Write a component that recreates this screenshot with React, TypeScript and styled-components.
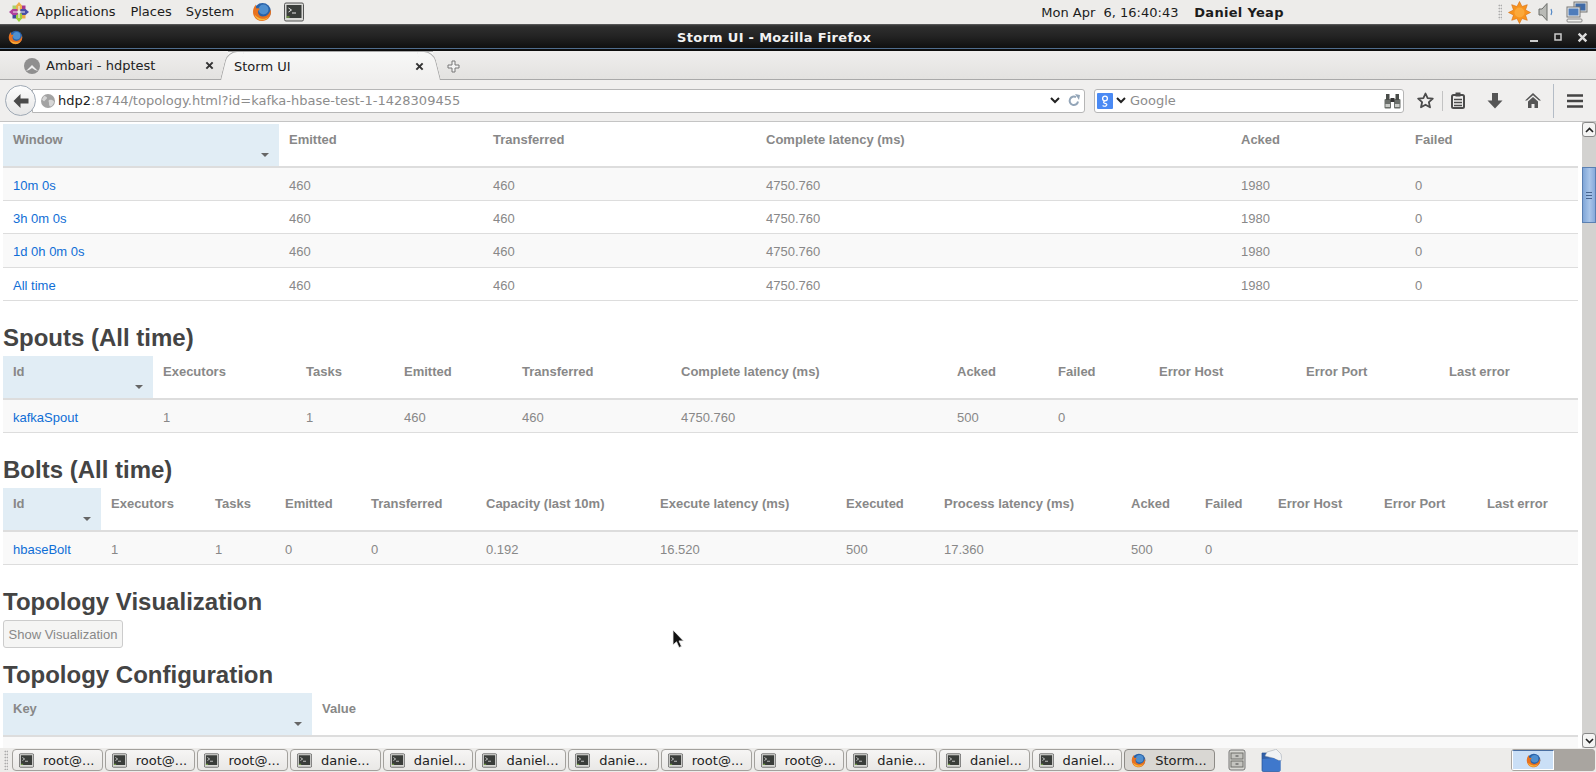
import React from "react";
import styled, { createGlobalStyle } from "styled-components";

const GlobalStyle = createGlobalStyle`
  html, body {
    margin: 0;
    padding: 0;
    overflow: hidden;
    background: #fff;
  }
  * { box-sizing: border-box; }
`;

const Screen = styled.div`
  width: 1596px;
  height: 772px;
  display: flex;
  flex-direction: column;
  overflow: hidden;
  font-family: "DejaVu Sans", sans-serif;
  font-size: 13px;
  color: #1c1c1c;
`;

/* ---------- gnome panel ---------- */
const TopPanel = styled.div`
  height: 24px;
  flex: none;
  display: flex;
  align-items: center;
  padding-left: 8px;
  background: #edecea;
`;
const PanelMenu = styled.span<{ $gap: number }>`
  margin-left: ${(p) => p.$gap}px;
  line-height: 22px;
  white-space: nowrap;
`;
const PanelLauncher = styled.span<{ $gap: number }>`
  margin-left: ${(p) => p.$gap}px;
  display: flex;
`;
const Clock = styled.span`
  margin-left: 737px;
  width: 153px;
  white-space: pre;
`;
const UserName = styled.span`
  font-weight: 700;
  width: 89px;
  letter-spacing: 0.3px;
  white-space: nowrap;
`;
const Handle = styled.span`
  width: 4px;
  height: 16px;
  margin-left: 215px;
  background-image: radial-gradient(#9c9c9c 0.7px, transparent 0.9px);
  background-size: 2.5px 3px;
`;
const Tray = styled.span<{ $gap: number }>`
  margin-left: ${(p) => p.$gap}px;
  display: flex;
`;

/* ---------- window chrome ---------- */
const TitleBar = styled.div`
  height: 27px;
  flex: none;
  display: grid;
  grid-template-columns: 677px 195px 1fr;
  align-items: center;
  padding-left: 8px;
  padding-right: 8px;
  color: #f2f2f2;
  font-weight: 700;
  background: linear-gradient(#3c3c3c 0, #2e2e2e 8%, #222 50%, #111 90%);
  border-top: 1px solid #555;
  border-bottom: 2px solid #0c0c0c;
  box-shadow: inset 0 -1px 0 #4f6c8c;
`;
const WindowTitle = styled.span`
  letter-spacing: 0.3px;
  margin-left: -8px;
  white-space: nowrap;
`;
const WindowControls = styled.div`
  justify-self: end;
  display: flex;
  align-items: center;
  gap: 14px;
`;

const TabStrip = styled.div`
  height: 29px;
  flex: none;
  display: flex;
  align-items: flex-end;
  padding-left: 24px;
  background: linear-gradient(#efeeed, #e3e2e0);
  border-bottom: 1px solid #a9a9a9;
`;
const InactiveTab = styled.div`
  width: 198px;
  height: 28px;
  padding: 1px 8px 0 0;
  display: flex;
  align-items: center;
  gap: 6px;
  color: #222;
`;
const TabTitle = styled.span`
  flex: 1;
`;
const ActiveTab = styled.div`
  position: relative;
  isolation: isolate;
  width: 205px;
  height: 29px;
  margin: 0 6px -1px 6px;
  padding: 1px 9px 0 6px;
  display: flex;
  align-items: center;
  background: linear-gradient(#f8f8f7, #f0efee);
  border-top: 1px solid #a9a9a9;
  &::before,
  &::after {
    content: "";
    position: absolute;
    z-index: -1;
    top: -1px;
    bottom: 0;
    width: 16px;
    background: linear-gradient(#f8f8f7, #f0efee);
    border-top: 1px solid #a9a9a9;
  }
  &::before {
    left: -8px;
    border-left: 1px solid #a9a9a9;
    border-radius: 10px 0 0 0;
    transform-origin: bottom left;
    transform: skewX(-14deg);
  }
  &::after {
    right: -8px;
    border-right: 1px solid #a9a9a9;
    border-radius: 0 10px 0 0;
    transform-origin: bottom right;
    transform: skewX(14deg);
  }
`;
const TabClose = styled.span`
  display: flex;
`;
const NewTab = styled.span`
  margin: 0 0 6px 8px;
  display: flex;
`;

const NavBar = styled.div`
  height: 42px;
  flex: none;
  display: flex;
  align-items: center;
  padding-left: 5px;
  background: #f0efee;
  border-bottom: 1px solid #c4c4c4;
`;
const BackButton = styled.div`
  width: 31px;
  height: 31px;
  flex: none;
  z-index: 1;
  display: flex;
  align-items: center;
  justify-content: center;
  border: 1px solid #9fa9b5;
  border-radius: 50%;
  background: linear-gradient(#fdfdfd, #e6e6e6);
`;
const UrlBox = styled.div`
  width: 1053px;
  height: 24px;
  flex: none;
  margin-left: -4px;
  padding: 0 4px 0 8px;
  display: flex;
  align-items: center;
  background: #fff;
  border: 1px solid #b6b6b6;
  border-radius: 0 3px 3px 0;
`;
const UrlText = styled.span`
  margin-left: 3px;
  flex: 1;
  color: #8c8c8c;
  white-space: nowrap;
  b {
    font-weight: 400;
    color: #222;
  }
`;
const UrlEnd = styled.span`
  display: flex;
  align-items: center;
  gap: 8px;
`;
const SearchBox = styled.div`
  width: 310px;
  height: 24px;
  flex: none;
  margin-left: 9px;
  padding: 0 2px;
  display: flex;
  align-items: center;
  background: #fff;
  border: 1px solid #b6b6b6;
  border-radius: 3px;
`;
const SearchPlaceholder = styled.span`
  flex: 1;
  margin-left: 1px;
  color: #8c8c8c;
`;
const ToolButton = styled.span<{ $w: number }>`
  width: ${(p) => p.$w}px;
  flex: none;
  display: flex;
  justify-content: center;
`;
const ToolSep = styled.span`
  width: 1px;
  height: 20px;
  flex: none;
  background: #c3c3c3;
`;
const ToolSepTall = styled(ToolSep)`
  height: 34px;
  background: #b4bcc6;
`;

/* ---------- page ---------- */
const Viewport = styled.div`
  flex: 1;
  min-height: 0;
  display: flex;
  background: #fff;
`;
const Page = styled.div`
  width: 1582px;
  flex: none;
  overflow: hidden;
  padding: 2px 4px 0 3px;
  font-family: "Liberation Sans", Arial, sans-serif;
  font-size: 13px;
  color: #888;
`;
const Heading = styled.h2<{ $top?: number }>`
  margin: ${(p) => p.$top ?? 24}px 0 5px;
  font-size: 24px;
  line-height: 26px;
  font-weight: 700;
  color: #444;
`;
const Table = styled.table`
  width: 1575px;
  table-layout: fixed;
  border-collapse: separate;
  border-spacing: 0;
  tbody tr:nth-child(3) td {
    height: 34px;
  }
`;
const HeadCell = styled.th<{ $sorted?: boolean }>`
  position: relative;
  height: 44px;
  padding: 7px 10px 0;
  line-height: 18px;
  text-align: left;
  vertical-align: top;
  font-weight: 700;
  color: #888;
  border-bottom: 2px solid #ddd;
  background: ${(p) => (p.$sorted ? "#e1edf5" : "#fff")};
  ${(p) =>
    p.$sorted &&
    `&::after {
      content: "";
      position: absolute;
      right: 10px;
      bottom: 9px;
      border-style: solid;
      border-width: 4px 4px 0;
      border-color: #666 transparent transparent;
    }`}
`;
const Row = styled.tr<{ $odd: boolean }>`
  background: ${(p) => (p.$odd ? "#f9f9f9" : "#fff")};
`;
const Cell = styled.td`
  height: 33px;
  padding: 3px 10px 0;
  line-height: 18px;
  white-space: nowrap;
  color: #888;
  border-bottom: 1px solid #ddd;
`;
const RowLink = styled.a`
  color: #0f6ed6;
  text-decoration: none;
`;
const ShowButton = styled.button`
  display: block;
  width: 120px;
  height: 28px;
  padding: 0;
  font: inherit;
  color: #888;
  text-align: center;
  background: #f5f5f4;
  border: 1px solid #ccc;
  border-radius: 3px;
`;

const ScrollBar = styled.div`
  width: 14px;
  flex: none;
  display: flex;
  flex-direction: column;
  background: #d3d2d0;
`;
const ScrollArrow = styled.div`
  height: 15px;
  flex: none;
  display: flex;
  align-items: center;
  justify-content: center;
  background: #f4f4f3;
  border: 1px solid #888;
  border-radius: 3px;
`;
const ScrollThumb = styled.div`
  height: 56px;
  margin-top: 30px;
  display: flex;
  flex-direction: column;
  align-items: center;
  justify-content: center;
  gap: 2px;
  background: linear-gradient(90deg, #80a6d8, #a9c5e9 55%, #86aadb);
  border: 1px solid #5b80b2;
  i {
    width: 6px;
    height: 1px;
    background: #46648f;
  }
`;
const ScrollSpacer = styled.div`
  flex: 1;
`;

const CursorMark = styled.svg`
  position: absolute;
  left: 672px;
  top: 629px;
`;

/* ---------- bottom panel ---------- */
const BottomPanel = styled.div`
  height: 24px;
  flex: none;
  display: flex;
  align-items: center;
  padding-left: 4px;
  background: #edecea;
`;
const BottomHandle = styled(Handle)`
  margin: 0 4px 0 0;
  height: 20px;
`;
const TaskList = styled.div`
  width: 1203px;
  display: flex;
  gap: 2px;
`;
const Task = styled.div<{ $active?: boolean }>`
  flex: 1;
  min-width: 0;
  height: 22px;
  padding-left: 6px;
  display: flex;
  align-items: center;
  gap: 9px;
  white-space: nowrap;
  overflow: hidden;
  color: #222;
  border: 1px solid ${(p) => (p.$active ? "#8d8b87" : "#a3a19d")};
  border-radius: 4px;
  background: ${(p) =>
    p.$active ? "#d9d7d3" : "linear-gradient(#f6f5f4, #e9e8e6)"};
`;
const Launcher = styled.span<{ $gap: number }>`
  margin-left: ${(p) => p.$gap}px;
  display: flex;
`;
const Pager = styled.div`
  width: 84px;
  height: 22px;
  margin-left: 229px;
  display: flex;
  border-radius: 3px;
  overflow: hidden;
  background: #a9a5a0;
  border: 1px solid #a9a5a0;
`;
const PagerActive = styled.div`
  width: 42px;
  display: flex;
  align-items: center;
  justify-content: center;
  background: #cadff6;
  border: 1px solid #fff;
  border-top-color: #4a6ea0;
`;

/* ---------- icons ---------- */
const Firefox = ({ size }: { size: number }) => (
  <svg width={size} height={size} viewBox="0 0 20 20">
    <circle cx="10.5" cy="9.5" r="8.5" fill="#2a62a8" />
    <circle cx="11.5" cy="7.5" r="5" fill="#4f8fcf" />
    <path
      d="M4 2.500C1.800 4.800 1 7.500 1 10c0 5 4 9 9 9s9-4 9-9c0-1-.2-2-.5-2.700-.5 3.900-3.500 7.200-7.500 7.200-3 0-5-2-5-4.500 0-1.500 1-2.500 2-3-1-.9-3-1-3.500-.5-.6-1-.7-2.500-.5-3.500z"
      fill="#e8721f"
    />
    <path d="M2.500 12.500C3.500 16 6.500 18.300 10 18.300c3 0 5.500-1.500 7-3.800-2 1.800-4.500 2.500-7 2.200-3-.4-5.800-1.800-7.500-4.200z" fill="#f6b93c" />
  </svg>
);

const Terminal = ({ size }: { size: number }) => (
  <svg width={size} height={size} viewBox="0 0 20 20">
    <rect x="0.5" y="1" width="19" height="18" rx="1.5" fill="#d9d9d6" stroke="#555" />
    <rect x="2.5" y="3" width="15" height="13" fill="#3a3d3a" />
    <path d="M4.500 6l3 2-3 2M8 11h4" fill="none" stroke="#e8e8e8" strokeWidth="1" />
    <rect x="2.5" y="14.5" width="3" height="1" fill="#8fce4a" />
  </svg>
);

const DistroLogo = () => (
  <svg width="22" height="22" viewBox="0 0 22 22">
    <rect x="4.5" y="4.5" width="5.5" height="5.5" fill="#a9cf6a" />
    <rect x="12" y="4.5" width="5.5" height="5.5" fill="#a7398f" />
    <rect x="4.5" y="12" width="5.5" height="5.5" fill="#3d4a9c" />
    <rect x="12" y="12" width="5.5" height="5.5" fill="#eeaa45" />
    <path d="M11 1l3 3.500v5h-6v-5z" fill="#eeb04a" />
    <path d="M21 11l-3.500 3h-5v-6h5z" fill="#4a4fa6" />
    <path d="M11 21l-3-3.500v-5h6v5z" fill="#9ccf3f" />
    <path d="M1 11l3.500-3h5v6h-5z" fill="#b0409c" />
    <path d="M11 5v12M5 11h12" stroke="#edecea" strokeWidth="1.2" />
  </svg>
);

const Sun = () => (
  <svg width="23" height="23" viewBox="0 0 23 23">
    <polygon
      points="11.5,0.5 14,5.5 19.3,3.7 17.5,9 22.5,11.5 17.5,14 19.3,19.3 14,17.5 11.5,22.5 9,17.5 3.7,19.3 5.5,14 0.5,11.5 5.5,9 3.7,3.7 9,5.5"
      fill="#f7931e"
      stroke="#d86f10"
      strokeWidth="0.6"
    />
    <circle cx="11.5" cy="11.5" r="5" fill="#fba83a" />
  </svg>
);

const Speaker = () => (
  <svg width="16" height="20" viewBox="0 0 16 20">
    <path d="M1 7h3l5-5.500v17L4 13H1z" fill="#b9bab6" stroke="#6d6f6b" />
    <path d="M13 7c1 1.800 1 4.200 0 6" fill="none" stroke="#4f86c6" strokeWidth="1.2" />
  </svg>
);

const Network = () => (
  <svg width="22" height="22" viewBox="0 0 22 22">
    <rect x="8" y="1" width="13" height="10" fill="#dfdfdb" stroke="#777" />
    <rect x="9.5" y="2.5" width="10" height="7" fill="#3f6aa6" />
    <rect x="1" y="6" width="13" height="10" fill="#efefec" stroke="#777" />
    <rect x="2.5" y="7.5" width="10" height="7" fill="#4f7dbb" />
    <rect x="1" y="18" width="15" height="3" rx="1" fill="#f1f1ee" stroke="#888" />
  </svg>
);

const Cross = ({ size, color }: { size: number; color: string }) => (
  <svg width={size} height={size} viewBox="0 0 10 10">
    <path d="M1.500 1.500l7 7M8.500 1.500l-7 7" stroke={color} strokeWidth="2.2" />
  </svg>
);

const Minimize = () => (
  <svg width="10" height="10" viewBox="0 0 10 10">
    <rect x="1" y="8" width="8" height="2" fill="#ccc" />
  </svg>
);

const Maximize = () => (
  <svg width="10" height="10" viewBox="0 0 10 10">
    <rect x="2" y="2" width="6" height="6" fill="none" stroke="#ccc" strokeWidth="1.5" />
  </svg>
);

const AmbariLogo = () => (
  <svg width="16" height="16" viewBox="0 0 16 16">
    <circle cx="8" cy="8" r="8" fill="#8f8f8f" />
    <path d="M2 13l6-6 6 6-3-1-3-2-3 2z" fill="#eee" />
  </svg>
);

const PlusIcon = () => (
  <svg width="13" height="13" viewBox="0 0 13 13">
    <path d="M5 1h3v4h4v3H8v4H5V8H1V5h4z" fill="#f4f4f4" stroke="#777" />
  </svg>
);

const BackArrow = () => (
  <svg width="16" height="14" viewBox="0 0 16 14">
    <path d="M7.500 0L0.500 7l7 7V9.500H15.500v-5H7.500z" fill="#4a4a4a" />
  </svg>
);

const Globe = () => (
  <svg width="14" height="14" viewBox="0 0 14 14">
    <circle cx="7" cy="7" r="7" fill="#a3a3a3" />
    <path d="M3 2c2 0 3 1 3 2S4 6 3.500 7 1.500 6 1 5.500zM8 6c2-.5 4 0 5 1.500 0 2-2 5-3.500 5S8 10 8 9 7 7 8 6z" fill="#d6d6d6" />
  </svg>
);

const Chevron = ({ color }: { color: string }) => (
  <svg width="10" height="7" viewBox="0 0 10 7">
    <path d="M1 1l4 4 4-4" fill="none" stroke={color} strokeWidth="2" />
  </svg>
);

const Reload = () => (
  <svg width="12" height="13" viewBox="0 0 12 13">
    <path d="M10 7.500A4.200 4.200 0 1 1 8 3.200" fill="none" stroke="#93a5b8" strokeWidth="2" />
    <path d="M7 0l5 1-1 5z" fill="#93a5b8" />
  </svg>
);

const GoogleBadge = () => (
  <svg width="16" height="16" viewBox="0 0 16 16">
    <rect width="16" height="16" rx="1" fill="#4a8af4" />
    <circle cx="8" cy="5.5" r="2.4" fill="none" stroke="#fff" strokeWidth="1.3" />
    <path d="M8 8c-2 .5-2 2 0 2.300s2.300 1.200 1.300 2.300-3.300.7-3.500-.3" fill="none" stroke="#fff" strokeWidth="1.2" />
  </svg>
);

const Binoculars = () => (
  <svg width="17" height="16" viewBox="0 0 17 16">
    <rect x="0.5" y="6" width="6.5" height="9.5" rx="1" fill="#6b6f6b" />
    <rect x="10" y="6" width="6.5" height="9.5" rx="1" fill="#6b6f6b" />
    <rect x="2" y="1" width="3.5" height="6" fill="#4a4d4a" />
    <rect x="11.5" y="1" width="3.5" height="6" fill="#4a4d4a" />
    <rect x="6.5" y="5" width="4" height="4" fill="#333" />
    <rect x="1.5" y="11" width="4.5" height="3" fill="#c9cbc8" />
    <rect x="11" y="11" width="4.5" height="3" fill="#c9cbc8" />
  </svg>
);

const Star = () => (
  <svg width="17" height="17" viewBox="0 0 17 17">
    <polygon
      points="8.5,1.5 10.6,6.2 15.8,6.7 11.9,10.2 13,15.3 8.5,12.7 4,15.3 5.1,10.2 1.2,6.7 6.4,6.2"
      fill="none"
      stroke="#4b4b4b"
      strokeWidth="1.8"
      strokeLinejoin="round"
    />
  </svg>
);

const Clipboard = () => (
  <svg width="14" height="17" viewBox="0 0 14 17">
    <rect x="1" y="3" width="12" height="13" rx="1.5" fill="none" stroke="#4b4b4b" strokeWidth="2" />
    <rect x="4.5" y="0.5" width="5" height="4" fill="#4b4b4b" />
    <path d="M3 7.500h8M3 10.500h8M3 13.500h8" stroke="#4b4b4b" strokeWidth="1.3" />
  </svg>
);

const DownArrow = () => (
  <svg width="16" height="16" viewBox="0 0 16 16">
    <path d="M5 0h6v7.500h4.500L8 15.500.5 7.500H5z" fill="#555" />
  </svg>
);

const HomeIcon = () => (
  <svg width="16" height="15" viewBox="0 0 16 15">
    <path d="M8 0L0 7.500h2L8 2.300l6 5.200h2zM3 8.500L8 4l5 4.500V15H9.500v-4h-3v4H3z" fill="#555" />
  </svg>
);

const Hamburger = () => (
  <svg width="16" height="14" viewBox="0 0 16 14">
    <path d="M0 1.500h16M0 7h16M0 12.500h16" stroke="#444" strokeWidth="2.4" />
  </svg>
);

const ArrowUp = () => (
  <svg width="9" height="6" viewBox="0 0 9 6">
    <path d="M1 5l3.500-3.500L8 5" fill="none" stroke="#222" strokeWidth="1.6" />
  </svg>
);

const ArrowDown = () => (
  <svg width="9" height="6" viewBox="0 0 9 6">
    <path d="M1 1l3.500 3.500L8 1" fill="none" stroke="#222" strokeWidth="1.6" />
  </svg>
);

const Cabinet = () => (
  <svg width="18" height="22" viewBox="0 0 18 22">
    <rect x="1" y="1" width="16" height="20" rx="2" fill="#d8d8d3" stroke="#777" />
    <rect x="3" y="4" width="12" height="6" fill="#c4c4bf" stroke="#6e6e6a" />
    <rect x="3" y="12" width="12" height="6" fill="#c4c4bf" stroke="#6e6e6a" />
    <path d="M7.500 7h3M7.500 15h3" stroke="#444" />
  </svg>
);

const Folder = () => (
  <svg width="21" height="23" viewBox="0 0 21 23">
    <path d="M1 4h7l2 2h9v15c0 1-.5 1.500-1.500 1.500h-15C1.500 22.500 1 22 1 21z" fill="#2f5fa8" stroke="#2a5596" strokeWidth="0.7" />
    <path d="M4 7l2-4 7-2 2-1 5 5 1 6-2 1-7-3z" fill="#f1f3f5" stroke="#9aa3ad" strokeWidth="0.5" />
    <path d="M1.500 10l11-1 5 3 2-1v10c0 .8-.5 1.200-1.200 1.200H2.700c-.8 0-1.200-.4-1.200-1.200z" fill="#3f78cc" />
  </svg>
);

/* ---------- data ---------- */
type Column = { title: string; width: number };
type TableRow = (string | { link: string })[];

const rowsOf = (window: string) => [{ link: window }, "460", "460", "4750.760", "1980", "0"];

const statsColumns: Column[] = [
  { title: "Window", width: 276 },
  { title: "Emitted", width: 204 },
  { title: "Transferred", width: 273 },
  { title: "Complete latency (ms)", width: 475 },
  { title: "Acked", width: 174 },
  { title: "Failed", width: 173 },
];
const statsRows: TableRow[] = ["10m 0s", "3h 0m 0s", "1d 0h 0m 0s", "All time"].map(rowsOf);

const spoutColumns: Column[] = [
  { title: "Id", width: 150 },
  { title: "Executors", width: 143 },
  { title: "Tasks", width: 98 },
  { title: "Emitted", width: 118 },
  { title: "Transferred", width: 159 },
  { title: "Complete latency (ms)", width: 276 },
  { title: "Acked", width: 101 },
  { title: "Failed", width: 101 },
  { title: "Error Host", width: 147 },
  { title: "Error Port", width: 143 },
  { title: "Last error", width: 139 },
];
const spoutRows: TableRow[] = [
  [{ link: "kafkaSpout" }, "1", "1", "460", "460", "4750.760", "500", "0", "", "", ""],
];

const boltColumns: Column[] = [
  { title: "Id", width: 98 },
  { title: "Executors", width: 104 },
  { title: "Tasks", width: 70 },
  { title: "Emitted", width: 86 },
  { title: "Transferred", width: 115 },
  { title: "Capacity (last 10m)", width: 174 },
  { title: "Execute latency (ms)", width: 186 },
  { title: "Executed", width: 98 },
  { title: "Process latency (ms)", width: 187 },
  { title: "Acked", width: 74 },
  { title: "Failed", width: 73 },
  { title: "Error Host", width: 106 },
  { title: "Error Port", width: 103 },
  { title: "Last error", width: 101 },
];
const boltRows: TableRow[] = [
  [{ link: "hbaseBolt" }, "1", "1", "0", "0", "0.192", "16.520", "500", "17.360", "500", "0", "", "", ""],
];

const configColumns: Column[] = [
  { title: "Key", width: 309 },
  { title: "Value", width: 1266 },
];
const configRows: TableRow[] = [["", ""]];

const taskNames = [
  "root@...", "root@...", "root@...", "danie...", "daniel...", "daniel...",
  "danie...", "root@...", "root@...", "danie...", "daniel...", "daniel...",
];

function DataTable({ columns, rows }: { columns: Column[]; rows: TableRow[] }) {
  return (
    <Table>
      <colgroup>
        {columns.map((c) => (
          <col key={c.title} width={c.width} />
        ))}
      </colgroup>
      <thead>
        <tr>
          {columns.map((c, i) => (
            <HeadCell key={c.title} $sorted={i === 0}>
              {c.title}
            </HeadCell>
          ))}
        </tr>
      </thead>
      <tbody>
        {rows.map((row, r) => (
          <Row key={r} $odd={r % 2 === 0}>
            {row.map((value, i) => (
              <Cell key={i}>
                {typeof value === "string" ? value : <RowLink href="#">{value.link}</RowLink>}
              </Cell>
            ))}
          </Row>
        ))}
      </tbody>
    </Table>
  );
}

export default function App() {
  return (
    <Screen>
      <GlobalStyle />
      <TopPanel>
        <DistroLogo />
        <PanelMenu $gap={6}>Applications</PanelMenu>
        <PanelMenu $gap={15}>Places</PanelMenu>
        <PanelMenu $gap={14}>System</PanelMenu>
        <PanelLauncher $gap={18}>
          <Firefox size={20} />
        </PanelLauncher>
        <PanelLauncher $gap={12}>
          <Terminal size={20} />
        </PanelLauncher>
        <Clock>Mon Apr  6, 16:40:43</Clock>
        <UserName>Daniel Yeap</UserName>
        <Handle />
        <Tray $gap={6}>
          <Sun />
        </Tray>
        <Tray $gap={7}>
          <Speaker />
        </Tray>
        <Tray $gap={12}>
          <Network />
        </Tray>
      </TopPanel>

      <TitleBar>
        <Firefox size={15} />
        <WindowTitle>Storm UI - Mozilla Firefox</WindowTitle>
        <WindowControls>
          <Minimize />
          <Maximize />
          <Cross size={11} color="#ddd" />
        </WindowControls>
      </TitleBar>

      <TabStrip>
        <InactiveTab>
          <AmbariLogo />
          <TabTitle>Ambari - hdptest</TabTitle>
          <TabClose>
            <Cross size={9} color="#333" />
          </TabClose>
        </InactiveTab>
        <ActiveTab>
          <TabTitle>Storm UI</TabTitle>
          <TabClose>
            <Cross size={9} color="#333" />
          </TabClose>
        </ActiveTab>
        <NewTab>
          <PlusIcon />
        </NewTab>
      </TabStrip>

      <NavBar>
        <BackButton>
          <BackArrow />
        </BackButton>
        <UrlBox>
          <Globe />
          <UrlText>
            <b>hdp2</b>:8744/topology.html?id=kafka-hbase-test-1-1428309455
          </UrlText>
          <UrlEnd>
            <Chevron color="#222" />
            <Reload />
          </UrlEnd>
        </UrlBox>
        <SearchBox>
          <GoogleBadge />
          <ToolButton $w={16}>
            <Chevron color="#222" />
          </ToolButton>
          <SearchPlaceholder>Google</SearchPlaceholder>
          <Binoculars />
        </SearchBox>
        <ToolButton $w={5} />
        <ToolButton $w={33}>
          <Star />
        </ToolButton>
        <ToolSep />
        <ToolButton $w={30}>
          <Clipboard />
        </ToolButton>
        <ToolButton $w={44}>
          <DownArrow />
        </ToolButton>
        <ToolButton $w={32}>
          <HomeIcon />
        </ToolButton>
        <ToolButton $w={4} />
        <ToolSepTall />
        <ToolButton $w={42}>
          <Hamburger />
        </ToolButton>
      </NavBar>

      <Viewport>
        <Page>
          <DataTable columns={statsColumns} rows={statsRows} />
          <Heading>Spouts (All time)</Heading>
          <DataTable columns={spoutColumns} rows={spoutRows} />
          <Heading>Bolts (All time)</Heading>
          <DataTable columns={boltColumns} rows={boltRows} />
          <Heading>Topology Visualization</Heading>
          <ShowButton>Show Visualization</ShowButton>
          <Heading $top={14}>Topology Configuration</Heading>
          <DataTable columns={configColumns} rows={configRows} />
        </Page>
        <ScrollBar>
          <ScrollArrow>
            <ArrowUp />
          </ScrollArrow>
          <ScrollThumb>
            <i />
            <i />
            <i />
          </ScrollThumb>
          <ScrollSpacer />
          <ScrollArrow>
            <ArrowDown />
          </ScrollArrow>
        </ScrollBar>
      </Viewport>

      <BottomPanel>
        <BottomHandle />
        <TaskList>
          {taskNames.map((name, i) => (
            <Task key={i}>
              <Terminal size={15} />
              <span>{name}</span>
            </Task>
          ))}
          <Task $active>
            <Firefox size={15} />
            <span>Storm...</span>
          </Task>
        </TaskList>
        <Launcher $gap={13}>
          <Cabinet />
        </Launcher>
        <Launcher $gap={15}>
          <Folder />
        </Launcher>
        <Pager>
          <PagerActive>
            <Firefox size={15} />
          </PagerActive>
        </Pager>
      </BottomPanel>

      <CursorMark width="13" height="20" viewBox="0 0 13 20">
        <path d="M1 1v15l3.500-3.200 2.500 5.700 2.500-1.100-2.500-5.500h4.500z" fill="#111" stroke="#eee" strokeWidth="0.8" />
      </CursorMark>
    </Screen>
  );
}
